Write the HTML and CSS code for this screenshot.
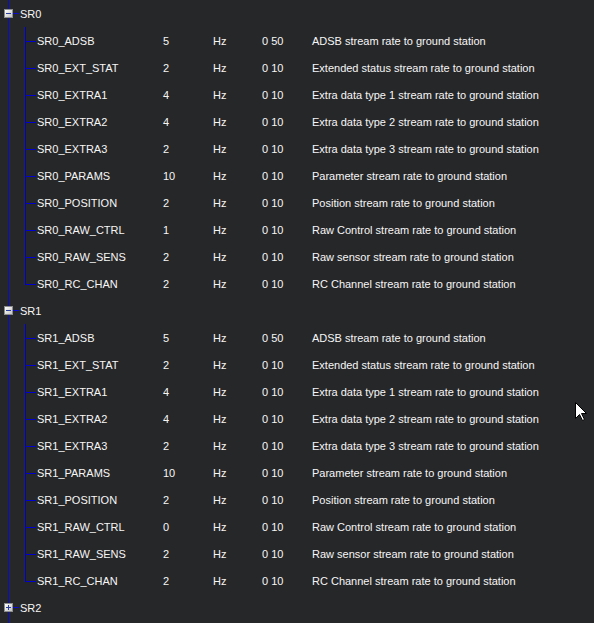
FILE: index.html
```html
<!DOCTYPE html>
<html>
<head>
<meta charset="utf-8">
<link rel="stylesheet" href="styles.css">
</head>
<body>
<div class="tree">
  <div class="row root"><span class="gut"><span class="toggle open"></span><span class="rtwig"></span></span><span class="name">SR0</span></div>
  <div class="row child"><span class="gut"><span class="stem"><span class="twig"></span></span></span><span class="name">SR0_ADSB</span><span class="val">5</span><span class="unit">Hz</span><span class="range">0 50</span><span class="desc">ADSB stream rate to ground station</span></div>
  <div class="row child"><span class="gut"><span class="stem"><span class="twig"></span></span></span><span class="name">SR0_EXT_STAT</span><span class="val">2</span><span class="unit">Hz</span><span class="range">0 10</span><span class="desc">Extended status stream rate to ground station</span></div>
  <div class="row child"><span class="gut"><span class="stem"><span class="twig"></span></span></span><span class="name">SR0_EXTRA1</span><span class="val">4</span><span class="unit">Hz</span><span class="range">0 10</span><span class="desc">Extra data type 1 stream rate to ground station</span></div>
  <div class="row child"><span class="gut"><span class="stem"><span class="twig"></span></span></span><span class="name">SR0_EXTRA2</span><span class="val">4</span><span class="unit">Hz</span><span class="range">0 10</span><span class="desc">Extra data type 2 stream rate to ground station</span></div>
  <div class="row child"><span class="gut"><span class="stem"><span class="twig"></span></span></span><span class="name">SR0_EXTRA3</span><span class="val">2</span><span class="unit">Hz</span><span class="range">0 10</span><span class="desc">Extra data type 3 stream rate to ground station</span></div>
  <div class="row child"><span class="gut"><span class="stem"><span class="twig"></span></span></span><span class="name">SR0_PARAMS</span><span class="val">10</span><span class="unit">Hz</span><span class="range">0 10</span><span class="desc">Parameter stream rate to ground station</span></div>
  <div class="row child"><span class="gut"><span class="stem"><span class="twig"></span></span></span><span class="name">SR0_POSITION</span><span class="val">2</span><span class="unit">Hz</span><span class="range">0 10</span><span class="desc">Position stream rate to ground station</span></div>
  <div class="row child"><span class="gut"><span class="stem"><span class="twig"></span></span></span><span class="name">SR0_RAW_CTRL</span><span class="val">1</span><span class="unit">Hz</span><span class="range">0 10</span><span class="desc">Raw Control stream rate to ground station</span></div>
  <div class="row child"><span class="gut"><span class="stem"><span class="twig"></span></span></span><span class="name">SR0_RAW_SENS</span><span class="val">2</span><span class="unit">Hz</span><span class="range">0 10</span><span class="desc">Raw sensor stream rate to ground station</span></div>
  <div class="row child last"><span class="gut"><span class="stem"><span class="twig"></span></span></span><span class="name">SR0_RC_CHAN</span><span class="val">2</span><span class="unit">Hz</span><span class="range">0 10</span><span class="desc">RC Channel stream rate to ground station</span></div>
  <div class="row root"><span class="gut"><span class="toggle open"></span><span class="rtwig"></span></span><span class="name">SR1</span></div>
  <div class="row child"><span class="gut"><span class="stem"><span class="twig"></span></span></span><span class="name">SR1_ADSB</span><span class="val">5</span><span class="unit">Hz</span><span class="range">0 50</span><span class="desc">ADSB stream rate to ground station</span></div>
  <div class="row child"><span class="gut"><span class="stem"><span class="twig"></span></span></span><span class="name">SR1_EXT_STAT</span><span class="val">2</span><span class="unit">Hz</span><span class="range">0 10</span><span class="desc">Extended status stream rate to ground station</span></div>
  <div class="row child"><span class="gut"><span class="stem"><span class="twig"></span></span></span><span class="name">SR1_EXTRA1</span><span class="val">4</span><span class="unit">Hz</span><span class="range">0 10</span><span class="desc">Extra data type 1 stream rate to ground station</span></div>
  <div class="row child"><span class="gut"><span class="stem"><span class="twig"></span></span></span><span class="name">SR1_EXTRA2</span><span class="val">4</span><span class="unit">Hz</span><span class="range">0 10</span><span class="desc">Extra data type 2 stream rate to ground station</span></div>
  <div class="row child"><span class="gut"><span class="stem"><span class="twig"></span></span></span><span class="name">SR1_EXTRA3</span><span class="val">2</span><span class="unit">Hz</span><span class="range">0 10</span><span class="desc">Extra data type 3 stream rate to ground station</span></div>
  <div class="row child"><span class="gut"><span class="stem"><span class="twig"></span></span></span><span class="name">SR1_PARAMS</span><span class="val">10</span><span class="unit">Hz</span><span class="range">0 10</span><span class="desc">Parameter stream rate to ground station</span></div>
  <div class="row child"><span class="gut"><span class="stem"><span class="twig"></span></span></span><span class="name">SR1_POSITION</span><span class="val">2</span><span class="unit">Hz</span><span class="range">0 10</span><span class="desc">Position stream rate to ground station</span></div>
  <div class="row child"><span class="gut"><span class="stem"><span class="twig"></span></span></span><span class="name">SR1_RAW_CTRL</span><span class="val">0</span><span class="unit">Hz</span><span class="range">0 10</span><span class="desc">Raw Control stream rate to ground station</span></div>
  <div class="row child"><span class="gut"><span class="stem"><span class="twig"></span></span></span><span class="name">SR1_RAW_SENS</span><span class="val">2</span><span class="unit">Hz</span><span class="range">0 10</span><span class="desc">Raw sensor stream rate to ground station</span></div>
  <div class="row child last"><span class="gut"><span class="stem"><span class="twig"></span></span></span><span class="name">SR1_RC_CHAN</span><span class="val">2</span><span class="unit">Hz</span><span class="range">0 10</span><span class="desc">RC Channel stream rate to ground station</span></div>
  <div class="row root"><span class="gut"><span class="toggle closed"></span><span class="rtwig"></span></span><span class="name">SR2</span></div>
</div>
<svg class="cursor" width="13" height="20" viewBox="0 0 13 20"><path d="M0.5 0.5 L0.5 16.5 L4.5 12.5 L7.5 18.5 L9.5 17.5 L6.5 11.5 L11.5 11.5 Z" fill="#fff" stroke="#000" stroke-width="1"/></svg>
</body>
</html>
```

FILE: styles.css
```css
html, body {
  margin: 0;
  padding: 0;
  background: #262729;
  height: 100%;
  overflow: hidden;
}
.tree {
  font-family: "Liberation Sans", Arial, sans-serif;
  font-size: 11px;
  color: #f6f6f6;
  min-height: 623px;
  margin-left: 8px;
  border-left: 1px solid #0a0ad0;
}
.row {
  display: flex;
  height: 27px;
  line-height: 28px;
  white-space: nowrap;
  margin-left: -9px;
}
.gut {
  display: flex;
  flex: none;
}
.root .gut {
  width: 20px;
  align-items: center;
}
.rtwig {
  width: 6px;
  height: 1px;
  margin-top: -1px;
  background: #0a0ad0;
}
.child .gut {
  width: 37px;
  align-items: flex-start;
}
.stem {
  box-sizing: border-box;
  margin-left: 25px;
  width: 11px;
  height: 27px;
  border-left: 1px solid #0000d0;
}
.last .stem {
  height: 15px;
}
.twig {
  display: block;
  box-sizing: border-box;
  width: 10px;
  height: 15px;
  border-bottom: 1px solid #0000d0;
}
.toggle {
  box-sizing: border-box;
  width: 9px;
  height: 9px;
  margin-left: 4px;
  border: 1px solid #8c8d8f;
}
.toggle.open {
  background:
    linear-gradient(#2a3f9a, #2a3f9a) 1px 3px / 5px 1px no-repeat,
    linear-gradient(135deg, #ffffff, #c4c4c4);
}
.toggle.closed {
  background:
    linear-gradient(#2a3f9a, #2a3f9a) 1px 3px / 5px 1px no-repeat,
    linear-gradient(#2a3f9a, #2a3f9a) 3px 1px / 1px 5px no-repeat,
    linear-gradient(135deg, #ffffff, #c4c4c4);
}
.name { flex: none; }
.child .name { width: 126px; }
.val { width: 50px; flex: none; }
.unit { width: 49px; flex: none; }
.range { width: 50px; flex: none; }
.desc { flex: none; }
.cursor {
  position: absolute;
  left: 575px;
  top: 402px;
}
```
